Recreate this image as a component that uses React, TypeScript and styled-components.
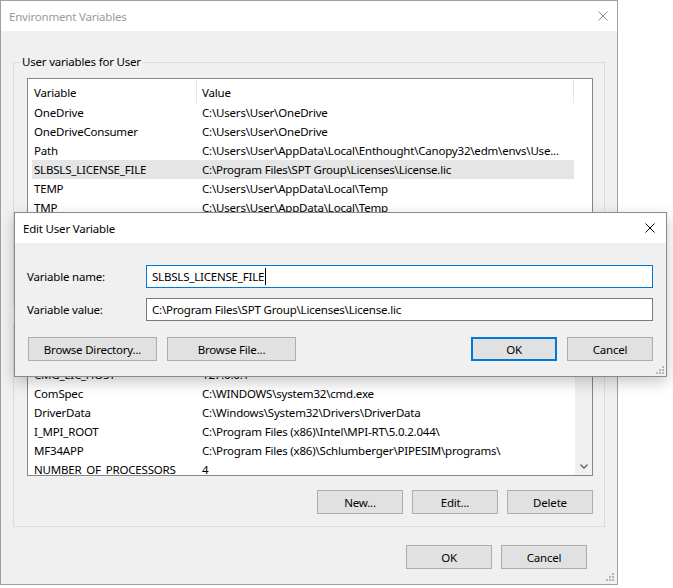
import React from "react";
import styled, { createGlobalStyle } from "styled-components";

const FONT = `"Noto Sans", "Liberation Sans", sans-serif`;

const GlobalStyle = createGlobalStyle`
  html, body {
    margin: 0;
    padding: 0;
    background: #ffffff;
  }
  body {
    font-family: ${FONT};
    font-size: 11.5px;
    letter-spacing: -0.2px;
    color: #000;
  }
  * {
    box-sizing: border-box;
  }
`;

const Desktop = styled.div`
  position: relative;
  width: 673px;
  height: 588px;
  overflow: hidden;
  background: #fff;
`;

const Window = styled.div`
  position: relative;
  width: 618px;
  height: 585px;
  border: 1px solid #a0a0a0;
  background: #f0f0f0;
  display: flex;
  flex-direction: column;
`;

const TitleBar = styled.div<{ $active?: boolean; $right: number }>`
  flex: none;
  height: 30px;
  background: #fff;
  display: flex;
  align-items: center;
  justify-content: space-between;
  padding: 0 ${p => p.$right}px 0 8px;
  color: ${p => (p.$active ? "#000" : "#9a9a9a")};
`;

const Body = styled.div`
  display: flex;
  flex-direction: column;
  padding: 0 12px;
`;

const Group = styled.fieldset<{ $top: number }>`
  margin: ${p => p.$top}px 0 0;
  padding: 8px 11px 12px 13px;
  border: 1px solid #dcdcdc;
  min-width: 0;
`;

const GroupTitle = styled.legend`
  margin-left: -7px;
  padding: 0 2px;
  line-height: 16px;
`;

const ListFrame = styled.div<{ $height: number }>`
  height: ${p => p.$height}px;
  border: 1px solid #828790;
  background: #fff;
  display: flex;
  overflow: hidden;
`;

const ListContent = styled.div`
  flex: 1;
  min-width: 0;
  display: flex;
  flex-direction: column;
`;

const HeaderRow = styled.div`
  flex: none;
  height: 24px;
  display: flex;
`;

const HeaderCell = styled.div<{ $w: number }>`
  width: ${p => p.$w}px;
  flex: none;
  padding: 1px 0 0 ${p => (p.$w > 200 ? 5 : 6)}px;
  display: flex;
  align-items: center;
  border-right: 1px solid #e5e5e5;
  margin-top: 1px;
`;

const ItemRow = styled.div<{ $selected?: boolean }>`
  flex: none;
  display: grid;
  grid-template-columns: 164px 378px;
  margin-left: 4px;
  width: 542px;
  height: 19px;
  line-height: 19px;
  background: ${p => (p.$selected ? "#e5e5e5" : "transparent")};
`;

const Cell = styled.div<{ $pad: number }>`
  padding-left: ${p => p.$pad}px;
  white-space: nowrap;
  overflow: hidden;
`;

const ScrollBar = styled.div`
  flex: none;
  width: 17px;
  background: #f0f0f0;
  display: flex;
  flex-direction: column;
`;

const ScrollArrow = styled.div`
  flex: none;
  height: 17px;
  display: flex;
  align-items: center;
  justify-content: center;
`;

const ScrollTrack = styled.div`
  flex: 1;
  padding: 1px 1px;
`;

const ScrollThumb = styled.div`
  height: 18px;
  background: #cdcdcd;
`;

const ButtonRow = styled.div<{ $top: number; $gap: number }>`
  display: flex;
  justify-content: flex-end;
  gap: ${p => p.$gap}px;
  margin-top: ${p => p.$top}px;
`;

const Button = styled.button<{ $w: number; $default?: boolean }>`
  width: ${p => p.$w}px;
  height: 24px;
  margin: 0;
  padding: 0;
  font-family: ${FONT};
  font-size: 11.5px;
  letter-spacing: -0.2px;
  color: #000;
  background: #e1e1e1;
  border: ${p => (p.$default ? "2px solid #0078d7" : "1px solid #adadad")};
  border-radius: 0;
`;

const Footer = styled.div`
  display: flex;
  justify-content: flex-end;
  gap: 9px;
  margin-top: 18px;
  padding-right: 30px;
`;

const Grip = styled.svg<{ $r: number; $b: number }>`
  position: absolute;
  right: ${p => p.$r}px;
  bottom: ${p => p.$b}px;
  width: 8px;
  height: 8px;
`;

const Dialog = styled.div`
  position: absolute;
  left: 14px;
  top: 212px;
  width: 653px;
  height: 165px;
  border: 1px solid #8a8a8a;
  background: #f0f0f0;
  box-shadow: 0 5px 14px rgba(0, 0, 0, 0.22);
  display: flex;
  flex-direction: column;
`;

const DialogBody = styled.div`
  display: flex;
  flex-direction: column;
  padding: 22px 13px 14px 12px;
`;

const Field = styled.div<{ $top: number }>`
  display: grid;
  grid-template-columns: 119px 1fr;
  align-items: center;
  margin-top: ${p => p.$top}px;
`;

const FieldLabel = styled.label``;

const TextBox = styled.div<{ $focused?: boolean }>`
  height: 23px;
  background: #fff;
  border: 1px solid ${p => (p.$focused ? "#0078d7" : "#7a7a7a")};
  padding-left: 5px;
  display: flex;
  align-items: center;
  white-space: nowrap;
`;

const Caret = styled.span`
  display: inline-block;
  width: 1px;
  height: 17px;
  background: #000;
  margin-left: 1px;
`;

const DialogButtons = styled.div`
  display: flex;
  align-items: center;
  gap: 10px;
  margin-top: 16px;
  padding-left: 1px;
`;

const Spacer = styled.div`
  flex: 1;
`;

type Row = { name: string; value: string; selected?: boolean };

const userVars: Row[] = [
  { name: "OneDrive", value: "C:\\Users\\User\\OneDrive" },
  { name: "OneDriveConsumer", value: "C:\\Users\\User\\OneDrive" },
  { name: "Path", value: "C:\\Users\\User\\AppData\\Local\\Enthought\\Canopy32\\edm\\envs\\Use..." },
  { name: "SLBSLS_LICENSE_FILE", value: "C:\\Program Files\\SPT Group\\Licenses\\License.lic", selected: true },
  { name: "TEMP", value: "C:\\Users\\User\\AppData\\Local\\Temp" },
  { name: "TMP", value: "C:\\Users\\User\\AppData\\Local\\Temp" },
];

const systemVars: Row[] = [
  { name: "CMG_LIC_HOST", value: "127.0.0.1" },
  { name: "ComSpec", value: "C:\\WINDOWS\\system32\\cmd.exe" },
  { name: "DriverData", value: "C:\\Windows\\System32\\Drivers\\DriverData" },
  { name: "I_MPI_ROOT", value: "C:\\Program Files (x86)\\Intel\\MPI-RT\\5.0.2.044\\" },
  { name: "MF34APP", value: "C:\\Program Files (x86)\\Schlumberger\\PIPESIM\\programs\\" },
  { name: "NUMBER_OF_PROCESSORS", value: "4" },
];

const CloseIcon = ({ color }: { color: string }) => (
  <svg width="10" height="10" viewBox="0 0 10 10">
    <path d="M0.5 0.5 L9.5 9.5 M9.5 0.5 L0.5 9.5" stroke={color} strokeWidth="1" fill="none" />
  </svg>
);

const Chevron = ({ up }: { up?: boolean }) => (
  <svg width="8" height="5" viewBox="0 0 8 5">
    <path d={up ? "M0.5 4.5 L4 1 L7.5 4.5" : "M0.5 0.5 L4 4 L7.5 0.5"} stroke="#606060" strokeWidth="1.3" fill="none" />
  </svg>
);

const GripDots = ({ r, b }: { r: number; b: number }) => (
  <Grip $r={r} $b={b} viewBox="0 0 8 8">
    {[
      [6, 0],
      [3, 3],
      [6, 3],
      [0, 6],
      [3, 6],
      [6, 6],
    ].map(([x, y]) => (
      <rect key={`${x}-${y}`} x={x} y={y} width="2" height="2" fill="#b8b8b8" />
    ))}
  </Grip>
);

const ListView = ({ rows, height, scroll }: { rows: Row[]; height: number; scroll?: boolean }) => (
  <ListFrame $height={height}>
    <ListContent>
      <HeaderRow>
        <HeaderCell $w={169}>Variable</HeaderCell>
        <HeaderCell $w={377}>Value</HeaderCell>
      </HeaderRow>
      {rows.map(r => (
        <ItemRow key={r.name} $selected={r.selected}>
          <Cell $pad={2}>{r.name}</Cell>
          <Cell $pad={6}>{r.value}</Cell>
        </ItemRow>
      ))}
    </ListContent>
    {scroll && (
      <ScrollBar>
        <ScrollArrow>
          <Chevron up />
        </ScrollArrow>
        <ScrollTrack>
          <ScrollThumb />
        </ScrollTrack>
        <ScrollArrow>
          <Chevron />
        </ScrollArrow>
      </ScrollBar>
    )}
  </ListFrame>
);

export default function App() {
  return (
    <>
      <GlobalStyle />
      <Desktop>
        <Window>
          <TitleBar $right={9}>
            <span>Environment Variables</span>
            <CloseIcon color="#8c8c8c" />
          </TitleBar>
          <Body>
            <Group $top={23}>
              <GroupTitle>User variables for User</GroupTitle>
              <ListView rows={userVars} height={176} />
              <ButtonRow $top={15} $gap={9}>
                <Button $w={86}>New...</Button>
                <Button $w={86}>Edit...</Button>
                <Button $w={86}>Delete</Button>
              </ButtonRow>
            </Group>
            <Group $top={10}>
              <GroupTitle>System variables</GroupTitle>
              <ListView rows={systemVars} height={136} scroll />
              <ButtonRow $top={14} $gap={9}>
                <Button $w={86}>New...</Button>
                <Button $w={86}>Edit...</Button>
                <Button $w={86}>Delete</Button>
              </ButtonRow>
            </Group>
          </Body>
          <Footer>
            <Button $w={86}>OK</Button>
            <Button $w={86}>Cancel</Button>
          </Footer>
          <GripDots r={3} b={3} />
        </Window>

        <Dialog>
          <TitleBar $active $right={11}>
            <span>Edit User Variable</span>
            <CloseIcon color="#000" />
          </TitleBar>
          <DialogBody>
            <Field $top={0}>
              <FieldLabel>Variable name:</FieldLabel>
              <TextBox $focused>
                SLBSLS_LICENSE_FILE
                <Caret />
              </TextBox>
            </Field>
            <Field $top={10}>
              <FieldLabel>Variable value:</FieldLabel>
              <TextBox>C:\Program Files\SPT Group\Licenses\License.lic</TextBox>
            </Field>
            <DialogButtons>
              <Button $w={129}>Browse Directory...</Button>
              <Button $w={129}>Browse File...</Button>
              <Spacer />
              <Button $w={86} $default>
                OK
              </Button>
              <Button $w={86}>Cancel</Button>
            </DialogButtons>
          </DialogBody>
          <GripDots r={2} b={2} />
        </Dialog>
      </Desktop>
    </>
  );
}
